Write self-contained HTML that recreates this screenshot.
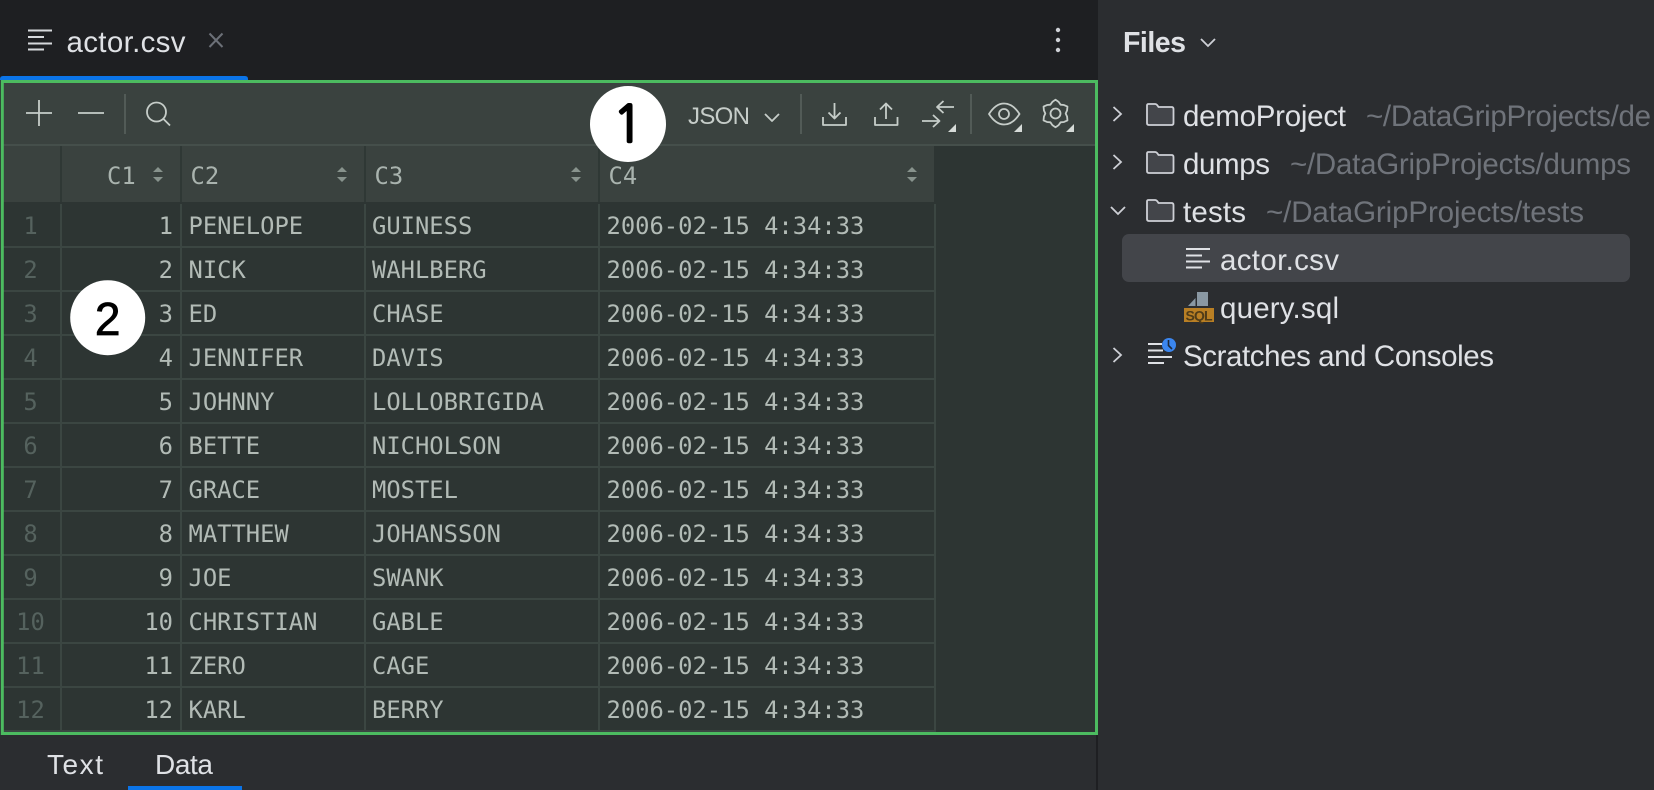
<!DOCTYPE html>
<html><head><meta charset="utf-8"><style>
html,body{margin:0;padding:0;width:1654px;height:790px;overflow:hidden;background:#2b2d30}
svg{display:block}
.s{font-family:"Liberation Sans",sans-serif}
.m{font-family:"DejaVu Sans Mono","Liberation Mono",monospace;font-size:23.8px}
.v{fill:#b2bbb6}.h{fill:#a9b3ae}.n{fill:#55625e}
.t{fill:#dfe1e5;font-size:29.500px}.g{fill:#6f737a;font-size:29.500px}
.ic{fill:none;stroke:#c6cdc9;stroke-width:1.800;stroke-linejoin:round}
.ln{stroke:#dfe1e5;stroke-width:2}
</style></head><body>
<svg width="1654" height="790" viewBox="0 0 1654 790" xmlns="http://www.w3.org/2000/svg">
<rect width="1654" height="790" fill="#2b2d30"/>
<rect x="0" y="0" width="1098" height="80" fill="#1e1f22"/>
<rect x="1096" y="0" width="2" height="790" fill="#1e1f22"/>
<path d="M0 80V79Q0 76 3 76H245Q248 76 248 79V80Z" fill="#0b74e8"/>
<!-- tab -->
<path d="M28 30.500H52M28 37H44M28 43.500H52M28 49.500H44" stroke="#d6d8dc" stroke-width="2" fill="none"/>
<text x="66.500" y="52" class="s" font-size="29.500" fill="#dfe1e5" textLength="119" lengthAdjust="spacing">actor.csv</text>
<path d="M209.500 33.500L222.500 47M222.500 33.500L209.500 47" stroke="#6c7078" stroke-width="2" fill="none"/>
<circle cx="1058" cy="30" r="2.200" fill="#ced0d6"/><circle cx="1058" cy="40" r="2.200" fill="#ced0d6"/><circle cx="1058" cy="50" r="2.200" fill="#ced0d6"/>
<!-- data panel -->
<rect x="2" y="82" width="1094" height="650" fill="#2d3533"/>
<rect x="2" y="82" width="1094" height="62" fill="#3a423f"/>
<rect x="2" y="144" width="1094" height="2" fill="#454f4b"/>
<rect x="2" y="146" width="932" height="56" fill="#3a423f"/>
<g fill="#2f3835">
<rect x="60" y="146" width="2" height="56"/><rect x="180" y="146" width="2" height="56"/><rect x="364" y="146" width="2" height="56"/><rect x="598" y="146" width="2" height="56"/>
</g>
<g fill="#3b4642">
<rect x="60" y="204" width="2" height="528"/><rect x="180" y="204" width="2" height="528"/><rect x="364" y="204" width="2" height="528"/><rect x="598" y="204" width="2" height="528"/><rect x="934" y="204" width="2" height="528"/>
<rect x="3" y="246" width="931" height="2"/><rect x="3" y="290" width="931" height="2"/><rect x="3" y="334" width="931" height="2"/><rect x="3" y="378" width="931" height="2"/><rect x="3" y="422" width="931" height="2"/><rect x="3" y="466" width="931" height="2"/><rect x="3" y="510" width="931" height="2"/><rect x="3" y="554" width="931" height="2"/><rect x="3" y="598" width="931" height="2"/><rect x="3" y="642" width="931" height="2"/><rect x="3" y="686" width="931" height="2"/><rect x="3" y="730" width="931" height="2"/>
</g>
<!-- toolbar icons -->
<path d="M39 100V126M26 113H52M78 113H104" class="ic"/>
<rect x="124" y="94" width="2" height="40" fill="#525b57"/>
<circle cx="156.500" cy="112" r="9.500" class="ic"/><path d="M163.500 119L170 125.500" class="ic"/>
<text x="688" y="124" class="s" font-size="24" fill="#c6cdc9" textLength="62" lengthAdjust="spacing">JSON</text>
<path d="M765 114L772 121L779 114" class="ic"/>
<rect x="800" y="94" width="2" height="40" fill="#525b57"/>
<path d="M823 117V125H846V117M834.500 103V118M828.500 112.500L834.500 118.500L840.500 112.500" class="ic"/>
<path d="M875 117V125H897.500V117M886 103.500V119M880 109.500L886 103.500L892 109.500" class="ic"/>
<path d="M954 107H937M943.500 101L937 107L943.500 113M922 121H939M933 115L939.500 121L933 127" class="ic"/>
<path d="M948 132H956V124Z" fill="#d6dbd8"/>
<rect x="970" y="94" width="2" height="40" fill="#525b57"/>
<path d="M989 114C993.500 107 998.500 103.500 1004 103.500C1009.500 103.500 1015 107 1019.500 114C1015 121 1009.500 124.500 1004 124.500C998.500 124.500 993.500 121 989 114Z" class="ic"/>
<circle cx="1004" cy="114" r="5" class="ic"/>
<path d="M1014 132H1022V124Z" fill="#d6dbd8"/>
<polygon transform="translate(1055.500 113.500)" points="0,-13.800 3.110,-11.590 5.100,-8.830 8.490,-8.490 11.950,-6.900 11.590,-3.110 10.200,0 11.590,3.110 11.950,6.900 8.490,8.490 5.100,8.830 3.110,11.590 0,13.800 -3.110,11.590 -5.100,8.830 -8.490,8.490 -11.950,6.900 -11.590,3.110 -10.200,0 -11.590,-3.110 -11.950,-6.900 -8.490,-8.490 -5.100,-8.830 -3.110,-11.590" class="ic"/>
<circle cx="1055.500" cy="113.500" r="5" class="ic"/>
<path d="M1066 132H1074V124Z" fill="#d6dbd8"/>
<!-- header -->
<g class="m h">
<text x="107" y="184">C1</text><text x="190.500" y="184">C2</text><text x="374.500" y="184">C3</text><text x="608.500" y="184">C4</text>
</g>
<g fill="#88938d">
<path d="M153 172L158 167L163 172ZM153 177L158 182L163 177Z"/>
<path d="M337 172L342 167L347 172ZM337 177L342 182L347 177Z"/>
<path d="M571 172L576 167L581 172ZM571 177L576 182L581 177Z"/>
<path d="M907 172L912 167L917 172ZM907 177L912 182L917 177Z"/>
</g>
<!-- row numbers -->
<g class="m n" text-anchor="middle">
<text x="30.500" y="234">1</text><text x="30.500" y="278">2</text><text x="30.500" y="322">3</text><text x="30.500" y="366">4</text><text x="30.500" y="410">5</text><text x="30.500" y="454">6</text><text x="30.500" y="498">7</text><text x="30.500" y="542">8</text><text x="30.500" y="586">9</text><text x="30.500" y="630">10</text><text x="30.500" y="674">11</text><text x="30.500" y="718">12</text>
</g>
<g class="m v" text-anchor="end">
<text x="173" y="234">1</text><text x="173" y="278">2</text><text x="173" y="322">3</text><text x="173" y="366">4</text><text x="173" y="410">5</text><text x="173" y="454">6</text><text x="173" y="498">7</text><text x="173" y="542">8</text><text x="173" y="586">9</text><text x="173" y="630">10</text><text x="173" y="674">11</text><text x="173" y="718">12</text>
</g>
<g class="m v">
<text x="188.500" y="234">PENELOPE</text><text x="188.500" y="278">NICK</text><text x="188.500" y="322">ED</text><text x="188.500" y="366">JENNIFER</text><text x="188.500" y="410">JOHNNY</text><text x="188.500" y="454">BETTE</text><text x="188.500" y="498">GRACE</text><text x="188.500" y="542">MATTHEW</text><text x="188.500" y="586">JOE</text><text x="188.500" y="630">CHRISTIAN</text><text x="188.500" y="674">ZERO</text><text x="188.500" y="718">KARL</text>
<text x="372" y="234">GUINESS</text><text x="372" y="278">WAHLBERG</text><text x="372" y="322">CHASE</text><text x="372" y="366">DAVIS</text><text x="372" y="410">LOLLOBRIGIDA</text><text x="372" y="454">NICHOLSON</text><text x="372" y="498">MOSTEL</text><text x="372" y="542">JOHANSSON</text><text x="372" y="586">SWANK</text><text x="372" y="630">GABLE</text><text x="372" y="674">CAGE</text><text x="372" y="718">BERRY</text>
<text x="606.500" y="234">2006-02-15 4:34:33</text><text x="606.500" y="278">2006-02-15 4:34:33</text><text x="606.500" y="322">2006-02-15 4:34:33</text><text x="606.500" y="366">2006-02-15 4:34:33</text><text x="606.500" y="410">2006-02-15 4:34:33</text><text x="606.500" y="454">2006-02-15 4:34:33</text><text x="606.500" y="498">2006-02-15 4:34:33</text><text x="606.500" y="542">2006-02-15 4:34:33</text><text x="606.500" y="586">2006-02-15 4:34:33</text><text x="606.500" y="630">2006-02-15 4:34:33</text><text x="606.500" y="674">2006-02-15 4:34:33</text><text x="606.500" y="718">2006-02-15 4:34:33</text>
</g>
<!-- green frame -->
<rect x="2.300" y="81.500" width="1094.200" height="652" fill="none" stroke="#4cbb60" stroke-width="3"/>
<!-- callouts -->
<circle cx="628" cy="124" r="38" fill="#fff"/>
<text x="628" y="142" font-family="NanumGothic,'Liberation Sans',sans-serif" font-size="50" fill="#000" text-anchor="middle" stroke="#000" stroke-width="2.400">1</text>
<circle cx="107.700" cy="317.700" r="37.500" fill="#fff"/>
<text x="107.700" y="335" class="s" font-size="46" fill="#000" text-anchor="middle" stroke="#000" stroke-width=".8">2</text>
<!-- bottom tabs -->
<text x="47" y="774" class="s" font-size="28" fill="#dfe1e5" textLength="56" lengthAdjust="spacing">Text</text>
<text x="155" y="774" class="s" font-size="28" fill="#dfe1e5" textLength="58" lengthAdjust="spacing">Data</text>
<rect x="128" y="786" width="114" height="4" fill="#0b74e8"/>
<!-- sidebar -->
<text x="1123" y="52" class="s" font-size="28.500" font-weight="700" fill="#dfe1e5" textLength="63" lengthAdjust="spacing">Files</text>
<path d="M1201 39L1208 46L1215 39" fill="none" stroke="#ced0d6" stroke-width="1.800"/>
<rect x="1122" y="234" width="508" height="48" rx="7" fill="#43454a"/>
<!-- chevrons -->
<path d="M1113.500 107L1121 114L1113.500 121M1113.500 155L1121 162L1113.500 169M1111 207L1118 214L1125 207M1113.500 348L1121 355L1113.500 362" fill="none" stroke="#ced0d6" stroke-width="1.800"/>
<!-- folders -->
<path d="M1147 108V105.500Q1147 104 1148.500 104H1155Q1156.500 104 1157.500 105.500L1158.500 107H1171.500Q1173.500 107 1173.500 109V123Q1173.500 125 1171.500 125H1149Q1147 125 1147 123Z" fill="#43454a" stroke="#ced0d6" stroke-width="1.800"/>
<path d="M1147 156V153.500Q1147 152 1148.500 152H1155Q1156.500 152 1157.500 153.500L1158.500 155H1171.500Q1173.500 155 1173.500 157V171Q1173.500 173 1171.500 173H1149Q1147 173 1147 171Z" fill="#43454a" stroke="#ced0d6" stroke-width="1.800"/>
<path d="M1147 204V201.500Q1147 200 1148.500 200H1155Q1156.500 200 1157.500 201.500L1158.500 203H1171.500Q1173.500 203 1173.500 205V219Q1173.500 221 1171.500 221H1149Q1147 221 1147 219Z" fill="#43454a" stroke="#ced0d6" stroke-width="1.800"/>
<!-- tree text -->
<g class="s">
<text x="1183" y="126" class="t" textLength="163" lengthAdjust="spacing">demoProject</text>
<text x="1366" y="126" class="g" textLength="285" lengthAdjust="spacing">~/DataGripProjects/de</text>
<text x="1183" y="174" class="t" textLength="87" lengthAdjust="spacing">dumps</text>
<text x="1290" y="174" class="g" textLength="341" lengthAdjust="spacing">~/DataGripProjects/dumps</text>
<text x="1183" y="222" class="t" textLength="63" lengthAdjust="spacing">tests</text>
<text x="1266" y="222" class="g" textLength="318" lengthAdjust="spacing">~/DataGripProjects/tests</text>
<text x="1220" y="270" class="t" textLength="119" lengthAdjust="spacing">actor.csv</text>
<text x="1220" y="318" class="t" textLength="119" lengthAdjust="spacing">query.sql</text>
<text x="1183" y="366" class="t" textLength="311" lengthAdjust="spacing">Scratches and Consoles</text>
</g>
<path d="M1186 249H1210M1186 255.500H1202M1186 261.500H1210M1186 267.500H1202" class="ln" fill="none"/>
<path d="M1197 292H1208V306H1197Z" fill="#8a98a3"/><path d="M1188 306L1195.500 298V306Z" fill="#8a98a3"/>
<rect x="1184" y="308" width="30" height="14" fill="#b97f24"/>
<text x="1199" y="320.500" class="s" font-size="14" font-weight="700" fill="#503c18" text-anchor="middle" textLength="27" lengthAdjust="spacing">SQL</text>
<path d="M1148 344H1162M1148 350.500H1163M1148 357H1172M1148 363H1164" class="ln" fill="none"/>
<circle cx="1169" cy="345" r="7" fill="#3b86ef"/>
<path d="M1168.500 340V345.500L1172 349" stroke="#1d2a3c" stroke-width="1.600" fill="none"/>
</svg>
</body></html>
